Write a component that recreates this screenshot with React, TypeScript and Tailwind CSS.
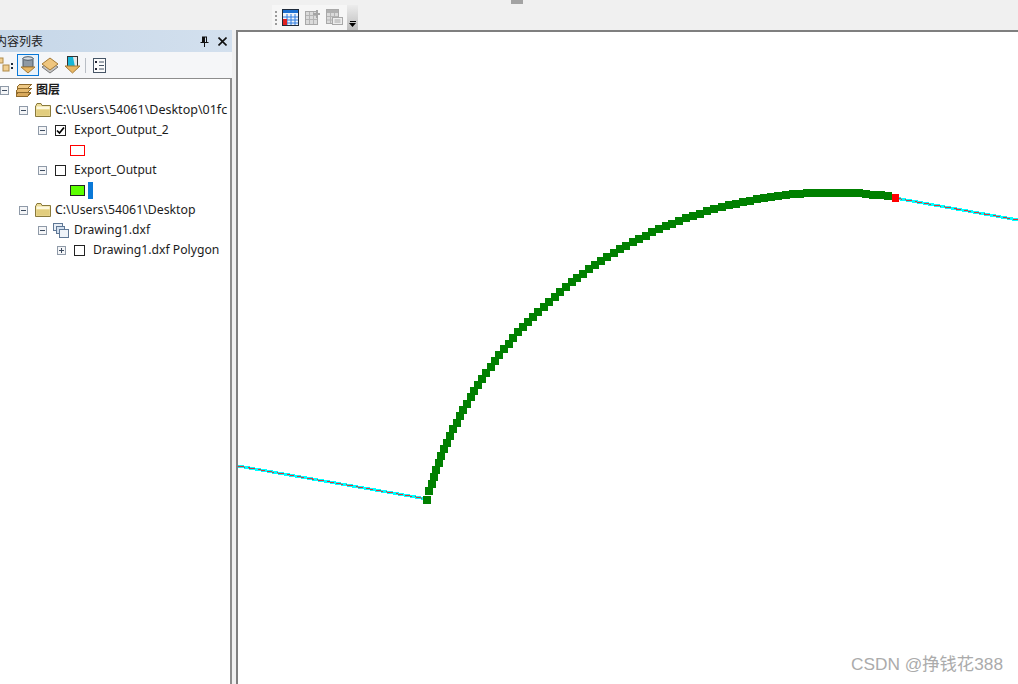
import type { ReactNode } from "react"

const font = { fontFamily: '"Noto Sans", "Noto Sans CJK SC", sans-serif' }

// centres of the vertex squares, read off the map
const vertices: [number, number][] = [
  [427, 500], [429, 491], [432, 484], [434, 477], [436, 470], [439, 463], [441, 456], [444, 449], [447, 443],
  [450, 436], [453, 429], [457, 423], [460, 416], [463, 410], [467, 404], [471, 397], [474, 391], [478, 385],
  [482, 379], [486, 373], [491, 367], [495, 361], [499, 355], [504, 349], [509, 344], [513, 338], [518, 332],
  [523, 327], [528, 322], [533, 317], [538, 312], [544, 307], [549, 302], [555, 297], [560, 292], [566, 287],
  [572, 282], [577, 278], [583, 274], [589, 269], [595, 265], [601, 261], [607, 257], [614, 253], [620, 249],
  [626, 246], [633, 242], [639, 239], [646, 236], [652, 232], [659, 229], [666, 226], [672, 224], [679, 221],
  [686, 218], [693, 216], [700, 214], [707, 211], [714, 209], [722, 207], [729, 205], [736, 204], [743, 202],
  [750, 201], [757, 199], [764, 198], [771, 197], [778, 196], [786, 195], [793, 194], [800, 194], [807, 193],
  [815, 193], [822, 193], [829, 193], [837, 193], [844, 193], [851, 193], [859, 193], [866, 194], [873, 195],
  [881, 195], [888, 196],
]

function Expander({ open = true }: { open?: boolean }) {
  return (
    <span className="relative flex h-[9px] w-[9px] shrink-0 items-center justify-center border border-[#8f9aa8] bg-[#f4f5f7]">
      <span className="h-px w-[5px] bg-[#3b4a5e]" />
      {!open && <span className="absolute h-[5px] w-px bg-[#3b4a5e]" />}
    </span>
  )
}

function Check({ checked = false }: { checked?: boolean }) {
  return (
    <span className="flex h-[11px] w-[11px] shrink-0 items-center justify-center border border-[#222] bg-white">
      {checked && (
        <svg width="9" height="9" viewBox="0 0 9 9">
          <path d="M1 4.5 L3.5 7 L8 1.5" fill="none" stroke="#000" strokeWidth="1.7" />
        </svg>
      )}
    </span>
  )
}

function Folder() {
  return (
    <svg width="16" height="14" viewBox="0 0 16 14" className="shrink-0">
      <path d="M.5 3 V13.5 H15.5 V2.5 H7 L6 .5 H2 L1 2.5 Z" fill="#ecdc98" stroke="#8a7a3c" />
      <path d="M1.5 3.5 H14.5 V6 H1.5 Z" fill="#fdf8de" />
      <path d="M1.5 7 H14.5 V12.5 H1.5 Z" fill="#e2cd7e" />
    </svg>
  )
}

function LayersIcon() {
  return (
    <svg width="17" height="14" viewBox="0 0 17 14" className="shrink-0" shapeRendering="crispEdges">
      <path d="M1 11 L4 9 H16 L13 13 H1 Z" fill="#d9a95c" stroke="#8f6a2c" />
      <path d="M1.5 7.5 L4.5 5 H16.5 L13.5 9 H1.5 Z" fill="#e5b96d" stroke="#8f6a2c" />
      <path d="M2 4 L5 1 H16.5 L13.5 5 H2 Z" fill="#efc985" stroke="#8f6a2c" />
    </svg>
  )
}

function DataFrameIcon() {
  return (
    <svg width="16" height="15" viewBox="0 0 16 15" className="shrink-0">
      <rect x=".5" y=".5" width="9" height="7" fill="#e8eef6" stroke="#5f7896" />
      <rect x="3.5" y="3.5" width="8" height="7" fill="#d3e0ef" stroke="#5f7896" />
      <rect x="6.5" y="6.5" width="9" height="8" fill="#eef3f9" stroke="#5f7896" />
    </svg>
  )
}

function Row({ pad, children }: { pad: string; children: ReactNode }) {
  return <div className={`flex h-5 items-center whitespace-nowrap ${pad}`}>{children}</div>
}

function ToolBtn({ active, children }: { active?: boolean; children: ReactNode }) {
  return (
    <span
      className={`flex h-[22px] w-[22px] items-center justify-center ${active ? "border border-[#0a78d7] bg-[#e8f2fb]" : ""}`}
    >
      {children}
    </span>
  )
}

function OpenTableIcon() {
  return (
    <svg width="17" height="18" viewBox="0 0 17 18">
      <rect x=".5" y=".5" width="16" height="16" fill="#eef3fa" stroke="#1e2a3a" />
      <rect x="1" y="1" width="15" height="3" fill="#1c6fd0" />
      <path d="M5 5 V16 M9 5 V16 M13 5 V16 M1 8 H16 M1 11 H16 M1 14 H16" stroke="#2f7de0" />
      <rect x="1" y="10" width="4" height="6" fill="#e02020" />
    </svg>
  )
}

function AddFieldIcon() {
  return (
    <svg width="15" height="17" viewBox="0 0 15 17">
      <rect x=".5" y="2.5" width="12" height="13" fill="#dadada" stroke="#a8a8a8" />
      <path d="M4.5 3 V15 M8.5 3 V15 M1 6.5 H12 M1 10.5 H12" stroke="#b4b4b4" />
      <path d="M8 4 H11 V1 H13 V4 H15 V6 H13 V9 H11 V6 H8 Z" fill="#a5a5a5" />
    </svg>
  )
}

function JoinTableIcon() {
  return (
    <svg width="17" height="17" viewBox="0 0 17 17">
      <rect x=".5" y=".5" width="12" height="14" fill="#dadada" stroke="#a8a8a8" />
      <rect x="1" y="1" width="11" height="3" fill="#b0b0b0" />
      <path d="M4.5 4 V14 M8.5 4 V14 M1 7.5 H12 M1 11 H12" stroke="#b4b4b4" />
      <rect x="6.5" y="8.5" width="10" height="7" fill="#ededed" stroke="#a8a8a8" />
      <path d="M8.5 11 H14.5 M8.5 13 H14.5" stroke="#a8a8a8" />
    </svg>
  )
}

export default function App() {
  return (
    <div className="flex h-[684px] w-[1018px] flex-col overflow-hidden bg-[#f0f0f0] text-[12px] text-[#1c1c1c]" style={font}>
      <div className="flex h-[30px] shrink-0 items-start">
        <div className="ml-[272px] mt-[5px] flex h-[25px] w-[86px] items-center bg-[#f6f6f6]">
          <span className="ml-[3px] flex flex-col gap-[2px]">
            <i className="block h-[2px] w-[2px] bg-[#9a9a9a]" />
            <i className="block h-[2px] w-[2px] bg-[#9a9a9a]" />
            <i className="block h-[2px] w-[2px] bg-[#9a9a9a]" />
            <i className="block h-[2px] w-[2px] bg-[#9a9a9a]" />
          </span>
          <span className="ml-[5px] flex items-center gap-[6px]">
            <OpenTableIcon />
            <AddFieldIcon />
            <JoinTableIcon />
          </span>
          <span className="ml-auto flex h-[25px] w-[11px] flex-col items-center justify-end bg-gradient-to-b from-[#ececec] to-[#bdbdbd] pb-[3px]">
            <i className="mb-px block h-px w-[6px] bg-black" />
            <svg width="7" height="4" viewBox="0 0 7 4">
              <path d="M0 0 H7 L3.5 4 Z" fill="#000" />
            </svg>
          </span>
        </div>
        <span className="ml-[153px] h-1 w-3 bg-[#a3a3a3]" />
      </div>

      <div className="flex min-h-0 flex-1">
        <div className="flex w-[232px] shrink-0 flex-col">
          <div className="flex h-[22px] items-center bg-gradient-to-r from-[#c6d7e8] to-[#d3e0ee] pt-px text-[12px] text-[#222]">
            <span className="-ml-[5px]">内容列表</span>
            <span className="ml-auto mr-[5px] flex items-center gap-[9px]">
              <svg width="9" height="11" viewBox="0 0 9 11">
                <path d="M2 .5 H7 V6 H8.5 V7 H5 V11 H4 V7 H.5 V6 H2 Z M5 1.5 V6 H6 V1.5 Z" fill="#111" />
              </svg>
              <svg width="9" height="9" viewBox="0 0 9 9">
                <path d="M.5 .5 L8.5 8.5 M8.5 .5 L.5 8.5" stroke="#111" strokeWidth="1.6" />
              </svg>
            </span>
          </div>

          <div className="flex h-[26px] items-center bg-[#f5f6f8]">
            <span className="flex w-[17px] justify-center -ml-[1px] mr-[1px]">
              <svg width="17" height="16" viewBox="0 0 17 16">
                <rect x="-1" y="1" width="5" height="5" fill="#f0cf91" stroke="#b08a48" />
                <rect x="4" y="8" width="6" height="6" fill="#f0cf91" stroke="#b08a48" />
                <path d="M13 6 V8 M13 10 V12" stroke="#1d2b3a" strokeWidth="2" />
              </svg>
            </span>
            <ToolBtn active>
              <svg width="16" height="18" viewBox="0 0 16 18">
                <path d="M3 2 H13 V11 H3 Z" fill="#8e99a4" stroke="#4d5864" />
                <ellipse cx="8" cy="2.5" rx="5" ry="1.8" fill="#d5dbe1" stroke="#4d5864" />
                <path d="M1 11 H15 L8 17 Z" fill="#e8b765" stroke="#a57a35" />
              </svg>
            </ToolBtn>
            <ToolBtn>
              <svg width="18" height="17" viewBox="0 0 18 17">
                <path d="M1 10 L9 16 L17 10 L9 5 Z" fill="#c4c4c4" stroke="#777" />
                <path d="M1 7 L9 13 L17 7 L9 1 Z" fill="#efc67f" stroke="#a57a35" />
              </svg>
            </ToolBtn>
            <ToolBtn>
              <svg width="17" height="18" viewBox="0 0 17 18">
                <rect x="3.5" y=".5" width="10" height="11" fill="#e8e8e8" stroke="#333" />
                <path d="M4 1 H9 L11 11 H4 Z" fill="#18b6d8" />
                <path d="M1 10 H16 L8.5 17 Z" fill="#e8b765" stroke="#a57a35" />
              </svg>
            </ToolBtn>
            <span className="mx-[2px] h-[15px] w-px bg-[#b9bec5]" />
            <ToolBtn>
              <svg width="13" height="15" viewBox="0 0 13 15">
                <rect x=".5" y=".5" width="12" height="14" fill="#fbfbfb" stroke="#465566" />
                <path d="M6 4 H11 M6 7.5 H11 M6 11 H11" stroke="#465566" />
                <rect x="2" y="3" width="2" height="2" fill="#223" />
                <rect x="2" y="10" width="2" height="2" fill="#223" />
              </svg>
            </ToolBtn>
          </div>

          <div className="min-h-0 flex-1 overflow-hidden border-t border-r-2 border-[#8d8d8d] bg-white pt-px">
            <Row pad="pl-0">
              <Expander />
              <span className="ml-[6px]"><LayersIcon /></span>
              <span className="ml-1 -mt-[2px] font-bold" style={{ fontFamily: '"Noto Sans CJK SC", sans-serif' }}>图层</span>
            </Row>
            <Row pad="pl-[19px]">
              <Expander />
              <span className="ml-[7px]"><Folder /></span>
              <span className="ml-[4px] text-[12.5px]">C:\Users\54061\Desktop\01fc</span>
            </Row>
            <Row pad="pl-[38px]">
              <Expander />
              <span className="ml-[8px]"><Check checked /></span>
              <span className="ml-[8px]">Export_Output_2</span>
            </Row>
            <Row pad="pl-[70px]">
              <span className="mt-px h-[11px] w-[15px] border border-[#ff0000] bg-white" />
            </Row>
            <Row pad="pl-[38px]">
              <Expander />
              <span className="ml-[8px]"><Check /></span>
              <span className="ml-[8px]">Export_Output</span>
            </Row>
            <Row pad="pl-[70px]">
              <span className="mt-px h-[11px] w-[15px] border border-[#222] bg-[#5cff00]" />
              <span className="ml-[3px] h-[17px] w-[5px] bg-[#0a78d7]" />
            </Row>
            <Row pad="pl-[19px]">
              <Expander />
              <span className="ml-[7px]"><Folder /></span>
              <span className="ml-[4px] text-[12.3px]">C:\Users\54061\Desktop</span>
            </Row>
            <Row pad="pl-[38px]">
              <Expander />
              <span className="ml-[6px]"><DataFrameIcon /></span>
              <span className="ml-[5px] text-[12.1px]">Drawing1.dxf</span>
            </Row>
            <Row pad="pl-[57px]">
              <Expander open={false} />
              <span className="ml-[8px]"><Check /></span>
              <span className="ml-[8px] text-[12.2px]">Drawing1.dxf Polygon</span>
            </Row>
          </div>
        </div>

        <div className="relative ml-[4px] flex-1 overflow-hidden border-t-2 border-l-2 border-[#7f7f7f] bg-white">
          <svg width="780" height="652" viewBox="238 32 780 652" className="block" shapeRendering="crispEdges">
            <path d="M238 466 L427 499 M895 198 L1018 220" fill="none" stroke="#00ffff" strokeWidth="3" />
            <path d="M238 466 L427 499 M895 198 L1018 220" fill="none" stroke="#e0303a" strokeWidth="1" strokeDasharray="7 3" />
            {vertices.map(([x, y], i) => (
              <rect key={i} x={x - 4} y={y - 4} width="8" height="8" fill="#008000" />
            ))}
            <rect x="892" y="194" width="7" height="8" fill="#ff0000" />
          </svg>
          <span
            className="absolute bottom-[6px] right-[15px] text-[17.3px] text-[#ababab]"
            style={{ fontFamily: '"Liberation Sans", "Noto Sans CJK SC", sans-serif' }}
          >
            CSDN @挣钱花388
          </span>
        </div>
      </div>
    </div>
  )
}
